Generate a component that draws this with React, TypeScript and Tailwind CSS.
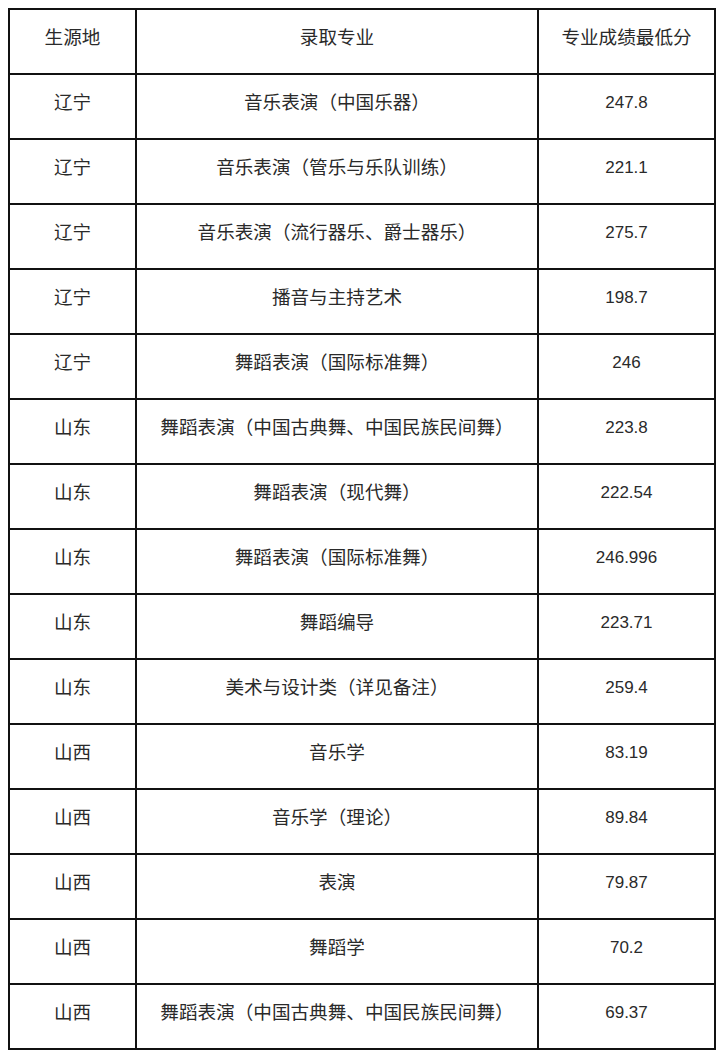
const rows: [string, string, string][] = [
  ['辽宁', '音乐表演（中国乐器）', '247.8'],
  ['辽宁', '音乐表演（管乐与乐队训练）', '221.1'],
  ['辽宁', '音乐表演（流行器乐、爵士器乐）', '275.7'],
  ['辽宁', '播音与主持艺术', '198.7'],
  ['辽宁', '舞蹈表演（国际标准舞）', '246'],
  ['山东', '舞蹈表演（中国古典舞、中国民族民间舞）', '223.8'],
  ['山东', '舞蹈表演（现代舞）', '222.54'],
  ['山东', '舞蹈表演（国际标准舞）', '246.996'],
  ['山东', '舞蹈编导', '223.71'],
  ['山东', '美术与设计类（详见备注）', '259.4'],
  ['山西', '音乐学', '83.19'],
  ['山西', '音乐学（理论）', '89.84'],
  ['山西', '表演', '79.87'],
  ['山西', '舞蹈学', '70.2'],
  ['山西', '舞蹈表演（中国古典舞、中国民族民间舞）', '69.37'],
];

const cell = 'border-2 border-[#111] text-center align-middle pb-[7px] h-[65px]';

export default function App() {
  return (
    <div
      className="w-[720px] h-[1056px] bg-white pt-[8px] pl-[8px] text-[18.6px] text-[#2a2a2a]"
      style={{ fontFamily: '"Liberation Sans", "Noto Sans CJK SC", sans-serif' }}
    >
      <table className="border-collapse table-fixed w-[706px]">
        <colgroup>
          <col className="w-[127px]" />
          <col className="w-[402px]" />
          <col className="w-[177px]" />
        </colgroup>
        <thead>
          <tr>
            <th className={cell + ' font-normal'}>生源地</th>
            <th className={cell + ' font-normal'}>录取专业</th>
            <th className={cell + ' font-normal'}>专业成绩最低分</th>
          </tr>
        </thead>
        <tbody>
          {rows.map(([place, major, score], i) => (
            <tr key={i}>
              <td className={cell}>{place}</td>
              <td className={cell}>{major}</td>
              <td className={cell + ' text-[17px]'}>{score}</td>
            </tr>
          ))}
        </tbody>
      </table>
    </div>
  );
}
